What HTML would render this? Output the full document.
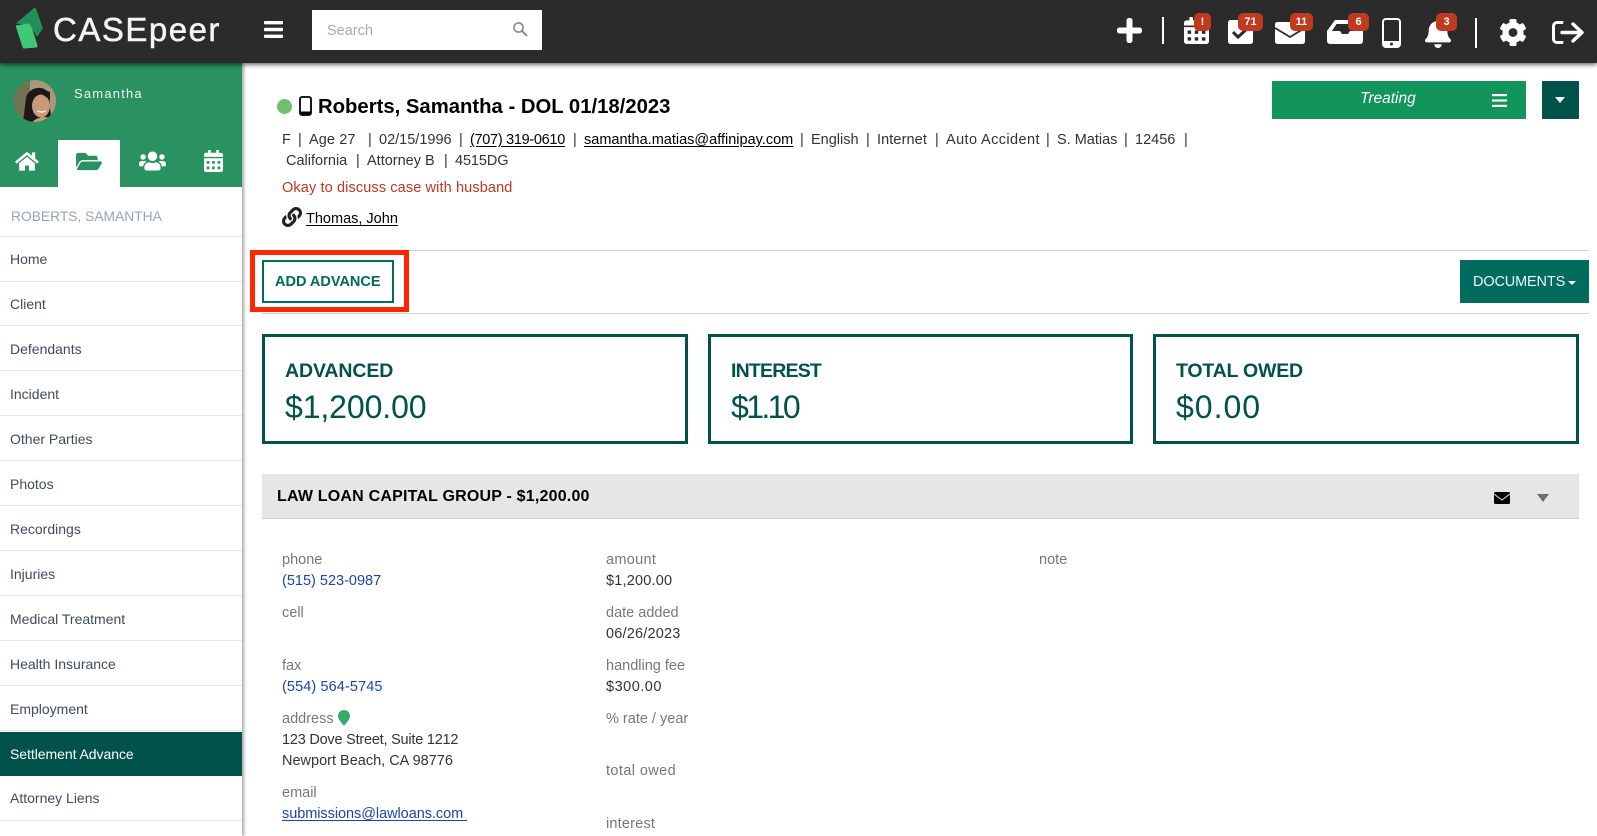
<!DOCTYPE html>
<html lang="en"><head><meta charset="utf-8"><title>CASEpeer</title>
<style>
*{box-sizing:border-box}
html,body{margin:0;padding:0;width:1597px;height:836px;overflow:hidden;background:#fff;font-family:"Liberation Sans",sans-serif}
.a{position:absolute}
.t{position:absolute;white-space:nowrap;line-height:20px;font-size:14.5px;color:#333}
.lb{color:#777}
.bl{color:#1c46a8}
u{text-underline-offset:2px}
#hdr{left:0;top:0;width:1597px;height:63px;background:#2b2b2b;box-shadow:0 2px 4px rgba(0,0,0,.55);z-index:5}
#side{left:0;top:63px;width:242px;height:773px;background:#fff;box-shadow:2px 0 3px rgba(0,0,0,.35);z-index:4}
.g{left:0;top:0;width:242px;height:124px;background:#2a9160}
.it{position:absolute;left:0;width:242px;height:45px;border-bottom:1px solid #e6e8ee;font-size:14px;line-height:46px;padding-left:10px;color:#414b5e}
.bd{position:absolute;top:13px;height:18px;border-radius:5px;background:#bf3a1f;color:#fff;font-size:11px;font-weight:bold;line-height:18px;text-align:center}
.card{position:absolute;top:334px;height:110px;border:3px solid #00524b;width:426px;color:#00524b}
.card b{position:absolute;left:20px;top:22px;font-size:19.5px;font-weight:bold;line-height:24px;white-space:nowrap}
.card span{position:absolute;left:20px;top:51px;font-size:32px;line-height:38px;white-space:nowrap}
.ln{position:absolute;left:262px;width:1327px;height:1px;background:#d2d2d2}
</style></head>
<body>
<div class="a" id="hdr">
<svg class="a" style="left:15px;top:7px" width="28" height="42" viewBox="0 0 28 42"><path d="M1 16.500 19 1a1.500 1.500 0 0 1 2 .5l6.500 19c.3 1 0 1.500-.5 2L22 30 15 18z" fill="#23905a"/><path d="M1 18.500 12 16.500c1-.2 1.800.2 2.500 1L17 21l5.500 17.500c.2 1-.2 1.800-1 2L9.500 41.500c-1 .1-1.500-.2-1.800-1L.8 19.500c-.2-.5-.1-.9.2-1z" fill="#3fc877"/></svg>
<div class="t" style="left:53px;top:9px;font-size:33px;line-height:42px;color:#f4f4f4;letter-spacing:1.5px;-webkit-text-stroke:.5px #f4f4f4">CASEpeer</div>
<svg class="a" style="left:264px;top:21px" width="19" height="17"><rect width="19" height="3.4" rx="1" fill="#fff"/><rect y="6.8" width="19" height="3.4" rx="1" fill="#fff"/><rect y="13.6" width="19" height="3.4" rx="1" fill="#fff"/></svg>
<div class="a" style="left:312px;top:10px;width:230px;height:40px;background:#fff"></div>
<div class="t" style="left:327px;top:21px;color:#aaa;font-size:14.5px">Search</div>
<svg class="a" style="left:512px;top:21px" width="16" height="16" viewBox="0 0 16 16" fill="none" stroke="#8a8a8a" stroke-width="1.6"><circle cx="6.5" cy="6.5" r="4.6"/><path d="M10 10l5 5" stroke-width="2"/></svg>

<svg class="a" style="left:1117px;top:18px" width="25" height="25"><rect y="9.5" width="25" height="6" rx="2.5" fill="#fff"/><rect x="9.5" width="6" height="25" rx="2.5" fill="#fff"/></svg>
<div class="a" style="left:1162px;top:17px;width:2px;height:27px;background:#fff"></div>

<svg class="a" style="left:1184px;top:17px" width="25" height="27" viewBox="0 0 448 512" preserveAspectRatio="none"><path fill="#fff" d="M0 464c0 26.500 21.500 48 48 48h352c26.500 0 48-21.500 48-48V192H0v272zm320-196c0-6.600 5.400-12 12-12h40c6.600 0 12 5.400 12 12v40c0 6.600-5.400 12-12 12h-40c-6.600 0-12-5.400-12-12v-40zm0 128c0-6.600 5.400-12 12-12h40c6.600 0 12 5.400 12 12v40c0 6.600-5.400 12-12 12h-40c-6.600 0-12-5.400-12-12v-40zM192 268c0-6.600 5.400-12 12-12h40c6.600 0 12 5.400 12 12v40c0 6.600-5.400 12-12 12h-40c-6.600 0-12-5.400-12-12v-40zm0 128c0-6.600 5.400-12 12-12h40c6.600 0 12 5.400 12 12v40c0 6.600-5.400 12-12 12h-40c-6.600 0-12-5.400-12-12v-40zM64 268c0-6.600 5.400-12 12-12h40c6.600 0 12 5.400 12 12v40c0 6.600-5.400 12-12 12H76c-6.600 0-12-5.400-12-12v-40zm0 128c0-6.600 5.400-12 12-12h40c6.600 0 12 5.400 12 12v40c0 6.600-5.400 12-12 12H76c-6.600 0-12-5.400-12-12v-40zM400 64h-48V16c0-8.800-7.200-16-16-16h-32c-8.800 0-16 7.200-16 16v48H160V16c0-8.800-7.200-16-16-16h-32c-8.800 0-16 7.200-16 16v48H48C21.500 64 0 85.500 0 112v48h448v-48c0-26.500-21.500-48-48-48z"/></svg>
<div class="bd" style="left:1194px;width:17px">!</div>

<svg class="a" style="left:1228px;top:20px" width="25" height="24" viewBox="0 0 25 24"><rect width="25" height="24" rx="2.500" fill="#fff"/><path d="M5 12l5 5 10-9" fill="none" stroke="#2b2b2b" stroke-width="3"/></svg>
<div class="bd" style="left:1238px;width:25px">71</div>

<svg class="a" style="left:1275px;top:22px" width="30" height="22" viewBox="0 0 30 22"><rect width="30" height="22" rx="2.500" fill="#fff"/><path d="M0 6l15 9 15-9" fill="none" stroke="#2b2b2b" stroke-width="1.800"/></svg>
<div class="bd" style="left:1290px;width:23px">11</div>

<svg class="a" style="left:1327px;top:20px" width="36" height="24" viewBox="0 0 36 24"><path fill="#fff" fill-rule="evenodd" d="M8 0h20l8 11v10a3 3 0 0 1-3 3H3a3 3 0 0 1-3-3V11zM9.500 4L5 11h8l2 3h6l2-3h8l-4.500-7z"/></svg>
<div class="bd" style="left:1348px;width:21px">6</div>

<svg class="a" style="left:1382px;top:18px" width="19" height="30" viewBox="0 0 19 30"><rect x="1" y="1" width="17" height="28" rx="3" fill="none" stroke="#fff" stroke-width="2"/><rect x="1" y="23" width="17" height="6" rx="2" fill="#fff"/><circle cx="9.500" cy="26" r="1.500" fill="#2b2b2b"/></svg>

<svg class="a" style="left:1425px;top:18px" width="26" height="30" viewBox="0 0 448 512"  preserveAspectRatio="none"><path fill="#fff" d="M224 512c35.320 0 63.970-28.650 63.970-64H160.030c0 35.350 28.650 64 63.970 64zm215.390-149.710c-19.320-20.760-55.470-51.990-55.470-154.290 0-77.700-54.480-139.900-127.940-155.160V32c0-17.670-14.320-32-31.980-32s-31.980 14.330-31.980 32v20.840C118.560 68.100 64.080 130.300 64.080 208c0 102.300-36.150 133.530-55.470 154.290-6 6.450-8.660 14.160-8.610 21.710.11 16.400 12.980 32 32.100 32h383.800c19.120 0 32-15.600 32.100-32 .05-7.550-2.610-15.270-8.610-21.710z"/></svg>
<div class="bd" style="left:1436px;width:21px">3</div>

<div class="a" style="left:1475px;top:18px;width:2px;height:30px;background:#fff"></div>
<svg class="a" style="left:1499px;top:18px" width="28" height="29" viewBox="0 0 512 512"><path fill="#fff" d="M487.400 315.700l-42.600-24.600c4.300-23.200 4.300-47 0-70.200l42.600-24.600c4.900-2.800 7.100-8.600 5.500-14-11.100-35.600-30-67.800-54.700-94.600-3.800-4.100-10-5.100-14.800-2.300L380.800 110c-17.900-15.400-38.500-27.300-60.800-35.100V25.800c0-5.600-3.900-10.500-9.400-11.700-36.700-8.200-74.300-7.800-109.200 0-5.500 1.200-9.400 6.100-9.400 11.700V75c-22.200 7.900-42.800 19.800-60.800 35.100L88.700 85.500c-4.900-2.800-11-1.900-14.800 2.300-24.700 26.700-43.600 58.900-54.700 94.600-1.700 5.400.6 11.200 5.500 14L67.300 221c-4.300 23.200-4.300 47 0 70.200l-42.600 24.600c-4.900 2.800-7.100 8.600-5.500 14 11.100 35.600 30 67.800 54.700 94.600 3.800 4.100 10 5.100 14.800 2.300l42.600-24.600c17.900 15.400 38.500 27.300 60.800 35.100v49.200c0 5.600 3.900 10.500 9.400 11.700 36.700 8.200 74.300 7.800 109.200 0 5.500-1.200 9.400-6.100 9.400-11.700v-49.200c22.200-7.900 42.800-19.800 60.800-35.100l42.600 24.600c4.900 2.800 11 1.900 14.800-2.300 24.700-26.700 43.600-58.900 54.700-94.600 1.500-5.500-.7-11.300-5.600-14.100zM256 336c-44.100 0-80-35.900-80-80s35.900-80 80-80 80 35.900 80 80-35.900 80-80 80z"/></svg>
<svg class="a" style="left:1552px;top:21px" width="32" height="23" viewBox="0 0 32 23" fill="none" stroke="#fff"><path d="M10 1.500H5a3.500 3.500 0 0 0-3.500 3.500v13A3.500 3.500 0 0 0 5 21.500h5" stroke-width="3" stroke-linecap="round"/><path d="M10 11.500h19M21 3l9 8.500-9 8.500" stroke-width="3.400" stroke-linejoin="round" stroke-linecap="round"/></svg>
</div>

<div class="a" id="side">
<div class="a g"></div>
<svg class="a" style="left:14px;top:17px" width="42" height="42" viewBox="0 0 42 42"><defs><clipPath id="c"><circle cx="21" cy="21" r="21"/></clipPath></defs><g clip-path="url(#c)"><rect width="42" height="42" fill="#a8977a"/><rect width="16" height="42" fill="#75734f"/><path d="M9 42 12 18C14 8 27 5 33 11 36 15 36 22 36 28L38 42z" fill="#201817"/><ellipse cx="27" cy="26" rx="9" ry="11.500" fill="#c79a7a"/><path d="M15 26C18 18 22 16 26 12 28 15 32 17 36 19L36 12 26 8 16 14z" fill="#201817"/><path d="M23 31q4 2.500 9 0-4 1.500-9 0z" fill="#f4ede6" stroke="#f4ede6"/><path d="M18 42q10-9 24-2v2z" fill="#c89a7b"/></g></svg>
<div class="t" style="left:74px;top:21px;font-size:13px;color:#f1f7f3;letter-spacing:1.2px">Samantha</div>
<div class="a" style="left:58px;top:77px;width:62px;height:47px;background:#fff"></div>
<svg class="a" style="left:15px;top:88px" width="24" height="21" viewBox="0 0 576 512"><path fill="#fff" d="M280.370 148.260L96 300.110V464a16 16 0 0 0 16 16l112.060-.29a16 16 0 0 0 15.920-16V368a16 16 0 0 1 16-16h64a16 16 0 0 1 16 16v95.640a16 16 0 0 0 16 16.050L464 480a16 16 0 0 0 16-16V300L295.670 148.260a12.190 12.190 0 0 0-15.300 0zM571.600 251.470L488 182.560V44.050a12 12 0 0 0-12-12h-56a12 12 0 0 0-12 12v72.610L318.470 43a48 48 0 0 0-61 0L4.340 251.470a12 12 0 0 0-1.600 16.900l25.500 31A12 12 0 0 0 45.150 301l235.220-193.740a12.190 12.190 0 0 1 15.300 0L530.900 301a12 12 0 0 0 16.900-1.600l25.500-31a12 12 0 0 0-1.700-16.930z"/></svg>
<svg class="a" style="left:76px;top:87px" width="26" height="23" viewBox="0 0 576 512"><path fill="#2a9160" d="M572.694 292.093L500.270 416.248A63.997 63.997 0 0 1 444.989 448H45.025c-18.523 0-30.064-20.093-20.731-36.093l72.424-124.155A64 64 0 0 1 152 256h399.964c18.523 0 30.064 20.093 20.730 36.093zM152 224h328v-48c0-26.510-21.490-48-48-48H272l-64-64H48C21.490 64 0 85.490 0 112v278.046l69.077-118.418C86.214 242.250 117.989 224 152 224z"/></svg>
<svg class="a" style="left:139px;top:87px" width="27" height="22" viewBox="0 0 640 512"><path fill="#fff" d="M96 224c35.300 0 64-28.700 64-64s-28.700-64-64-64-64 28.700-64 64 28.700 64 64 64zm448 0c35.300 0 64-28.700 64-64s-28.700-64-64-64-64 28.700-64 64 28.700 64 64 64zm32 32h-64c-17.600 0-33.500 7.100-45.100 18.600 40.300 22.100 68.900 62 75.100 109.400h66c17.700 0 32-14.300 32-32v-32c0-35.300-28.700-64-64-64zm-256 0c61.900 0 112-50.100 112-112S381.900 32 320 32 208 82.100 208 144s50.100 112 112 112zm76.800 32h-8.300c-20.800 10-43.900 16-68.500 16s-47.600-6-68.500-16h-8.300C179.600 288 128 339.600 128 403.200V432c0 26.500 21.500 48 48 48h288c26.500 0 48-21.500 48-48v-28.800c0-63.600-51.600-115.200-115.200-115.200zm-223.700-13.400C161.500 263.100 145.600 256 128 256H64c-35.300 0-64 28.700-64 64v32c0 17.700 14.300 32 32 32h65.900c6.300-47.400 34.900-87.300 75.200-109.400z"/></svg>
<svg class="a" style="left:204px;top:87px" width="19" height="22" viewBox="0 0 448 512" preserveAspectRatio="none"><path fill="#fff" d="M0 464c0 26.500 21.500 48 48 48h352c26.500 0 48-21.500 48-48V192H0v272zm320-196c0-6.600 5.400-12 12-12h40c6.600 0 12 5.400 12 12v40c0 6.600-5.400 12-12 12h-40c-6.600 0-12-5.400-12-12v-40zm0 128c0-6.600 5.400-12 12-12h40c6.600 0 12 5.400 12 12v40c0 6.600-5.400 12-12 12h-40c-6.600 0-12-5.400-12-12v-40zM192 268c0-6.600 5.400-12 12-12h40c6.600 0 12 5.400 12 12v40c0 6.600-5.400 12-12 12h-40c-6.600 0-12-5.400-12-12v-40zm0 128c0-6.600 5.400-12 12-12h40c6.600 0 12 5.400 12 12v40c0 6.600-5.400 12-12 12h-40c-6.600 0-12-5.400-12-12v-40zM64 268c0-6.600 5.400-12 12-12h40c6.600 0 12 5.400 12 12v40c0 6.600-5.400 12-12 12H76c-6.600 0-12-5.400-12-12v-40zm0 128c0-6.600 5.400-12 12-12h40c6.600 0 12 5.400 12 12v40c0 6.600-5.400 12-12 12H76c-6.600 0-12-5.400-12-12v-40zM400 64h-48V16c0-8.800-7.200-16-16-16h-32c-8.800 0-16 7.200-16 16v48H160V16c0-8.800-7.200-16-16-16h-32c-8.800 0-16 7.200-16 16v48H48C21.500 64 0 85.500 0 112v48h448v-48c0-26.500-21.500-48-48-48z"/></svg>
<div class="t" style="left:11px;top:144px;font-size:13.800px;color:#9aa3bd">ROBERTS, SAMANTHA</div>
<div class="it" style="top:173px;border-top:1px solid #e6e8ee;height:46px;line-height:44px">Home</div>
<div class="it" style="top:218px">Client</div>
<div class="it" style="top:263px">Defendants</div>
<div class="it" style="top:308px">Incident</div>
<div class="it" style="top:353px">Other Parties</div>
<div class="it" style="top:398px">Photos</div>
<div class="it" style="top:443px">Recordings</div>
<div class="it" style="top:488px">Injuries</div>
<div class="it" style="top:533px">Medical Treatment</div>
<div class="it" style="top:578px">Health Insurance</div>
<div class="it" style="top:623px">Employment</div>
<div class="it" style="top:669px;height:44px;line-height:44px;background:#00524b;color:#fff;border:0;letter-spacing:-.05px">Settlement Advance</div>
<div class="it" style="top:713px;line-height:44px">Attorney Liens</div>
</div>

<div class="a" style="left:277px;top:99px;width:15px;height:15px;border-radius:50%;background:#72bf6e"></div>
<svg class="a" style="left:299px;top:96px" width="13" height="20" viewBox="0 0 13 20"><rect x="1" y="1" width="11" height="18" rx="2" fill="none" stroke="#000" stroke-width="1.800"/><rect x="1" y="15.500" width="11" height="3.500" fill="#000"/></svg>
<div class="t" style="left:318px;top:94px;font-size:20.300px;line-height:26px;font-weight:bold;color:#000">Roberts, Samantha - DOL 01/18/2023</div>

<div class="t" style="left:282px;top:130px">F</div><div class="t" style="left:298px;top:130px">|</div>
<div class="t" style="left:309px;top:130px;letter-spacing:.1px">Age 27</div><div class="t" style="left:368px;top:130px">|</div>
<div class="t" style="left:379px;top:130px">02/15/1996</div><div class="t" style="left:459px;top:130px">|</div>
<div class="t" style="left:470px;top:130px;color:#000;letter-spacing:-.3px"><u>(707) 319-0610</u></div><div class="t" style="left:573px;top:130px">|</div>
<div class="t" style="left:584px;top:130px;color:#000"><u>samantha.matias@affinipay.com</u></div><div class="t" style="left:800px;top:130px">|</div>
<div class="t" style="left:811px;top:130px">English</div><div class="t" style="left:866px;top:130px">|</div>
<div class="t" style="left:877px;top:130px;letter-spacing:.1px">Internet</div><div class="t" style="left:935px;top:130px">|</div>
<div class="t" style="left:946px;top:130px;letter-spacing:.4px">Auto Accident</div><div class="t" style="left:1046px;top:130px">|</div>
<div class="t" style="left:1057px;top:130px">S. Matias</div><div class="t" style="left:1124px;top:130px">|</div>
<div class="t" style="left:1135px;top:130px">12456</div><div class="t" style="left:1184px;top:130px">|</div>

<div class="t" style="left:286px;top:151px">California</div><div class="t" style="left:356px;top:151px">|</div>
<div class="t" style="left:367px;top:151px">Attorney B</div><div class="t" style="left:444px;top:151px">|</div>
<div class="t" style="left:455px;top:151px;letter-spacing:-.1px">4515DG</div>
<div class="t" style="left:282px;top:178px;color:#c0361f;letter-spacing:.12px">Okay to discuss case with husband</div>
<svg class="a" style="left:282px;top:207px" width="20" height="20" viewBox="0 0 512 512"><path fill="#222" d="M326.612 185.391c59.747 59.809 58.927 155.698.36 214.590-.11.12-.24.25-.36.37l-67.200 67.200c-59.270 59.270-155.699 59.262-214.960 0-59.270-59.260-59.270-155.700 0-214.960l37.106-37.106c9.840-9.840 26.786-3.300 27.294 10.606.648 17.722 3.826 35.527 9.690 52.721 1.986 5.822.567 12.262-3.783 16.612l-13.087 13.087c-28.026 28.026-28.905 73.660-1.155 101.960 28.024 28.579 74.086 28.749 102.325.51l67.200-67.190c28.191-28.191 28.073-73.757 0-101.830-3.701-3.694-7.429-6.564-10.341-8.569a16.037 16.037 0 0 1-6.947-12.606c-.396-10.567 3.348-21.456 11.698-29.806l21.054-21.055c5.521-5.521 14.182-6.199 20.584-1.731a152.482 152.482 0 0 1 20.522 17.197zM467.547 44.449c-59.261-59.262-155.690-59.270-214.960 0l-67.200 67.200c-.12.12-.25.25-.36.37-58.566 58.892-59.387 154.781.36 214.590a152.454 152.454 0 0 0 20.521 17.196c6.402 4.468 15.064 3.789 20.584-1.731l21.054-21.055c8.350-8.350 12.094-19.239 11.698-29.806a16.037 16.037 0 0 0-6.947-12.606c-2.912-2.005-6.640-4.875-10.341-8.569-28.073-28.073-28.191-73.639 0-101.830l67.200-67.190c28.239-28.239 74.300-28.069 102.325.51 27.750 28.300 26.872 73.934-1.155 101.960l-13.087 13.087c-4.350 4.350-5.769 10.790-3.783 16.612 5.864 17.194 9.042 34.999 9.690 52.721.509 13.906 17.454 20.446 27.294 10.606l37.106-37.106c59.271-59.259 59.271-155.699.001-214.959z"/></svg>
<div class="t" style="left:306px;top:209px;color:#000"><u>Thomas, John</u></div>

<div class="a" style="left:1272px;top:81px;width:254px;height:38px;background:#12955a"></div>
<div class="t" style="left:1360px;top:89px;font-size:15.500px;font-style:italic;color:#fff">Treating</div>
<svg class="a" style="left:1492px;top:94px" width="15" height="13"><rect width="15" height="2.200" fill="#fff"/><rect y="5.400" width="15" height="2.200" fill="#fff"/><rect y="10.800" width="15" height="2.200" fill="#fff"/></svg>
<div class="a" style="left:1542px;top:81px;width:37px;height:38px;background:#00524b"></div>
<div class="a" style="left:1555px;top:97px;border-left:5.500px solid transparent;border-right:5.500px solid transparent;border-top:6px solid #fff"></div>

<div class="ln" style="top:250px"></div>
<div class="ln" style="top:313px"></div>
<div class="a" style="left:250px;top:250px;width:159px;height:62px;border:5px solid #ff2600"></div>
<div class="a" style="left:262px;top:260px;width:132px;height:43px;border:2px solid #006b5f"></div>
<div class="t" style="left:275px;top:272px;font-size:14.500px;font-weight:bold;color:#00695e;letter-spacing:0">ADD ADVANCE</div>
<div class="a" style="left:1460px;top:260px;width:129px;height:43px;background:#006b5f"></div>
<div class="t" style="left:1473px;top:272px;font-size:14.500px;color:#f0f8f5;letter-spacing:-.15px">DOCUMENTS</div>
<div class="a" style="left:1568px;top:281px;border-left:4px solid transparent;border-right:4px solid transparent;border-top:4px solid #fff"></div>

<div class="card" style="left:262px"><b style="letter-spacing:-.1px">ADVANCED</b><span style="letter-spacing:-.1px">$1,200.00</span></div>
<div class="card" style="left:708px;width:425px"><b style="letter-spacing:-.8px">INTEREST</b><span style="letter-spacing:-2.6px">$1.10</span></div>
<div class="card" style="left:1153px"><b style="letter-spacing:-.2px">TOTAL OWED</b><span style="letter-spacing:1px">$0.00</span></div>

<div class="a" style="left:262px;top:474px;width:1317px;height:45px;background:#e6e6e6;border-bottom:1px solid #cfcfcf"></div>
<div class="t" style="left:277px;top:487px;font-size:16px;font-weight:bold;color:#000;letter-spacing:.2px">LAW LOAN CAPITAL GROUP - $1,200.00</div>
<svg class="a" style="left:1494px;top:492px" width="16" height="12" viewBox="0 0 16 12"><rect width="16" height="12" rx="1.500" fill="#000"/><path d="M0 2l8 6 8-6" fill="none" stroke="#e6e6e6" stroke-width="1"/></svg>
<div class="a" style="left:1537px;top:494px;border-left:6.500px solid transparent;border-right:6.500px solid transparent;border-top:8px solid #6e6e6e"></div>

<div class="t lb" style="left:282px;top:550px">phone</div>
<div class="t bl" style="left:282px;top:571px">(515) 523-0987</div>
<div class="t lb" style="left:282px;top:603px">cell</div>
<div class="t lb" style="left:282px;top:656px">fax</div>
<div class="t bl" style="left:282px;top:677px;letter-spacing:.1px">(554) 564-5745</div>
<div class="t lb" style="left:282px;top:709px">address</div>
<svg class="a" style="left:338px;top:710px" width="12" height="16" viewBox="0 0 12 16"><path d="M6 16C3 12 0 9 0 6a6 6 0 0 1 12 0c0 3-3 6-6 10z" fill="#34ad6c"/></svg>
<div class="t" style="left:282px;top:730px;letter-spacing:-.22px">123 Dove Street, Suite 1212</div>
<div class="t" style="left:282px;top:751px">Newport Beach, CA 98776</div>
<div class="t lb" style="left:282px;top:783px">email</div>
<div class="t bl" style="left:282px;top:804px;letter-spacing:-.05px"><u style="white-space:pre">submissions@lawloans.com </u></div>

<div class="t lb" style="left:606px;top:550px;letter-spacing:.3px">amount</div>
<div class="t" style="left:606px;top:571px;letter-spacing:.2px">$1,200.00</div>
<div class="t lb" style="left:606px;top:603px">date added</div>
<div class="t" style="left:606px;top:624px;letter-spacing:.2px">06/26/2023</div>
<div class="t lb" style="left:606px;top:656px">handling fee</div>
<div class="t" style="left:606px;top:677px;letter-spacing:.5px">$300.00</div>
<div class="t lb" style="left:606px;top:709px">% rate / year</div>
<div class="t lb" style="left:606px;top:761px;letter-spacing:.4px">total owed</div>
<div class="t lb" style="left:606px;top:814px;letter-spacing:.2px">interest</div>
<div class="t lb" style="left:1039px;top:550px">note</div>
</body></html>
